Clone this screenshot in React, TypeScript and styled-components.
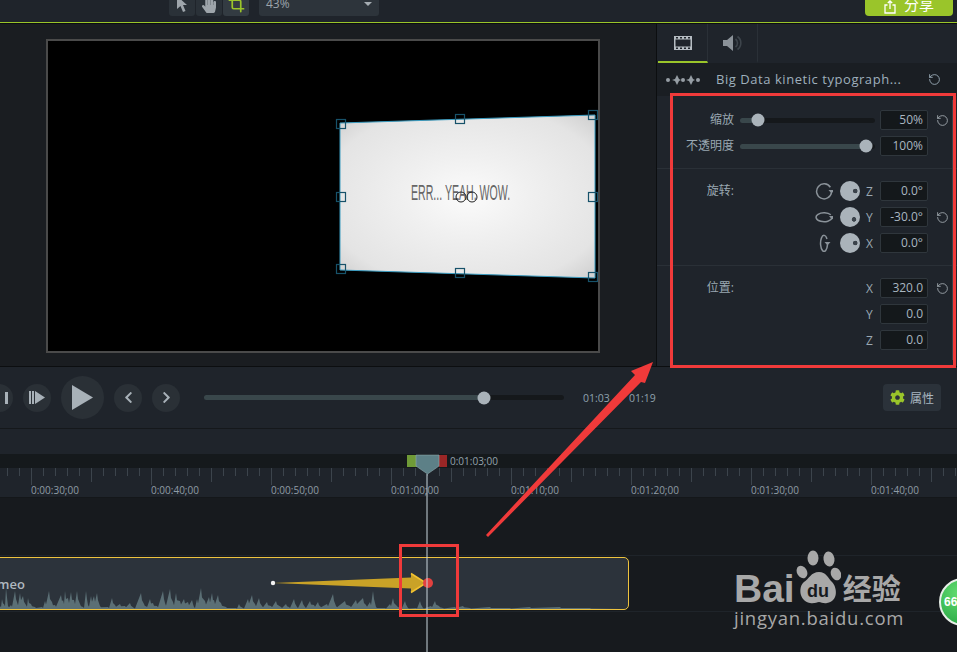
import styled, { createGlobalStyle } from 'styled-components';
import { FaCog, FaChevronLeft, FaChevronRight, FaHandPaper } from 'react-icons/fa';
import { Crop, RotateCcw } from 'lucide-react';

const green = '#9ac52a';
const ui = `'Open Sans', 'Noto Sans CJK SC', sans-serif`;

const GlobalStyle = createGlobalStyle`
  * { box-sizing: border-box; }
  html, body { margin: 0; background: #1f242b; }
  body { font-family: ${ui}; }
`;

const timeLabels = ['0:00:30;00', '0:00:40;00', '0:00:50;00', '0:01:00;00', '0:01:10;00', '0:01:20;00', '0:01:30;00', '0:01:40;00'];

// x, height of the wave form peaks
const peaks: [number, number][] = [
  [0, 3], [2, 10], [4, 5], [6, 21], [8, 3], [11, 4], [15, 18], [17, 7], [20, 16], [23, 13], [26, 4], [28, 11], [31, 5], [35, 2], [42, 2],
  [45, 8], [49, 18], [52, 7], [55, 4], [61, 14], [63, 9], [65, 18], [68, 11], [71, 17], [74, 9], [77, 18], [80, 5], [83, 2], [86, 18], [88, 4],
  [91, 13], [94, 13], [97, 16], [100, 3], [108, 2], [112, 11], [115, 4], [120, 5], [125, 3], [130, 6], [134, 1], [141, 16], [144, 5], [146, 3], [150, 10],
  [153, 6], [157, 3], [163, 18], [165, 6], [170, 20], [173, 7], [176, 16], [180, 8], [184, 10], [188, 7], [192, 9], [194, 2], [197, 10], [201, 21],
  [205, 8], [209, 12], [212, 16], [214, 9], [218, 14], [221, 6], [226, 2], [236, 1], [239, 5], [243, 1], [248, 10], [252, 14], [255, 5], [259, 11],
  [262, 3], [267, 7], [271, 3], [276, 8], [281, 2], [286, 5], [289, 2], [294, 10], [297, 2], [302, 9], [305, 2], [310, 8], [314, 4], [318, 7], [320, 3],
  [327, 5], [333, 15], [336, 3], [345, 8], [350, 3], [356, 9], [363, 11], [366, 4], [370, 7], [373, 18], [376, 2], [385, 1], [390, 5], [393, 11], [397, 3], [401, 2], [405, 8],
  [408, 1], [416, 1], [420, 8], [423, 1], [431, 3], [435, 8], [439, 3], [443, 1], [455, 2], [463, 3], [470, 1], [490, 2], [510, 1], [530, 2], [560, 2], [590, 1], [620, 0],
];
// a small notch after every peak keeps the spikes narrow
const wavePath = `M0 24 ${peaks
  .map(([x, h]) => `L${x} ${24 - h} L${x + 1} ${24 - h * 0.55}`)
  .join(' ')} L620 24 Z`;

const Page = styled.div`
  position: relative;
  width: 957px;
  height: 652px;
  overflow: hidden;
  display: flex;
  flex-direction: column;
  background: #1f242b;
`;

const TopBar = styled.header`
  height: 23px;
  flex: none;
  display: flex;
  align-items: flex-end;
  padding: 0 4px 6px 169px;
  overflow: hidden;
  background: #1f242b;
  border-bottom: 1px solid ${green};
`;

const ToolGroup = styled.div`
  display: flex;
  gap: 1px;
`;

const ToolButton = styled.div<{ $active?: boolean }>`
  width: 26px;
  height: 28px;
  display: flex;
  align-items: flex-end;
  justify-content: center;
  padding-bottom: 3px;
  color: #9ea5ab;
  background: ${({ $active }) => ($active ? '#333b42' : '#2a3138')};
  border-radius: 0 0 3px 3px;
`;

const ZoomSelect = styled.div`
  width: 120px;
  height: 28px;
  margin-left: 10px;
  padding: 0 7px 5px;
  display: flex;
  align-items: flex-end;
  justify-content: space-between;
  font-size: 12px;
  line-height: 14px;
  color: #9ea5ab;
  background: #2d343b;
  border-radius: 0 0 3px 3px;
`;

const Caret = styled.span`
  width: 0;
  height: 0;
  margin: 0 0 5px;
  border-left: 4px solid transparent;
  border-right: 4px solid transparent;
  border-top: 4px solid #a5acb2;
`;

const ShareButton = styled.div`
  width: 88px;
  height: 28px;
  margin-left: auto;
  padding-bottom: 2px;
  display: flex;
  align-items: flex-end;
  justify-content: center;
  gap: 8px;
  font-size: 15px;
  line-height: 20px;
  color: #fff;
  background: ${green};
  border-radius: 0 0 4px 4px;
`;

const Main = styled.div`
  height: 344px;
  flex: none;
  display: flex;
  border-top: 1px solid #0c0e10;
  border-bottom: 1px solid #0c0e10;
`;

const CanvasArea = styled.section`
  width: 657px;
  flex: none;
  padding: 15px 0 0 46px;
  background: #1a1d21;
  border-right: 1px solid #0c0e10;
`;

const Stage = styled.div`
  width: 554px;
  height: 314px;
  background: #000;
  border: 2px solid #4a4a4a;

  svg {
    display: block;
  }
`;

const SidePanel = styled.aside`
  position: relative;
  flex: 1;
  display: flex;
  flex-direction: column;
  background: #1f242b;
`;

const Tabs = styled.div`
  height: 39px;
  flex: none;
  padding-left: 1px;
  display: flex;
`;

const Tab = styled.div<{ $active?: boolean }>`
  width: 50px;
  display: flex;
  align-items: center;
  justify-content: center;
  border-right: 1px solid #2a3037;
  border-bottom: 2px solid ${({ $active }) => ($active ? green : 'transparent')};
`;

const ClipHeader = styled.div`
  height: 33px;
  flex: none;
  display: flex;
  align-items: center;
  padding: 0 16px 0 9px;
  background: #1a1e23;
  color: #9fb0bd;
`;

const ClipName = styled.span`
  margin: 0 0 2px 16px;
  flex: 1;
  font-size: 13px;
  letter-spacing: 0.55px;
  white-space: nowrap;
`;

const Section = styled.div<{ $top?: number; $last?: boolean }>`
  padding: ${({ $top }) => $top ?? 9}px 0 9px;
  border-bottom: 1px solid ${({ $last }) => ($last ? 'transparent' : '#2a3037')};
`;

const Row = styled.div`
  height: 26px;
  display: grid;
  grid-template-columns: 77px 1fr 48px 29px;
  align-items: center;
`;

const Label = styled.span`
  margin-bottom: 2px;
  text-align: right;
  font-size: 12px;
  color: #9aa8b2;
`;

const Controls = styled.div`
  display: flex;
  align-items: center;
  justify-content: flex-end;
  padding-right: 5px;
`;

const SliderTrack = styled.div<{ $value: number; $width: number; $thumb?: number }>`
  position: relative;
  width: ${({ $width }) => $width}px;
  height: 5px;
  flex: none;
  border-radius: 3px;
  background: linear-gradient(to right, #39474b ${({ $value }) => $value}%, #15181b ${({ $value }) => $value}%);

  &::after {
    content: '';
    position: absolute;
    left: ${({ $value }) => $value}%;
    top: 50%;
    width: ${({ $thumb }) => $thumb ?? 13}px;
    height: ${({ $thumb }) => $thumb ?? 13}px;
    border-radius: 50%;
    background: #aab3ba;
    transform: translate(-50%, -50%);
  }
`;

const Field = styled.div`
  height: 20px;
  padding-right: 4px;
  text-align: right;
  font-size: 12px;
  line-height: 18px;
  color: #a9b6c0;
  background: #14181b;
  border: 1px solid #2f363c;
  border-radius: 2px;
`;

const ResetCell = styled.div`
  padding-left: 8px;
  display: flex;
  color: #a3abb1;
`;

const Axis = styled.span`
  width: 9px;
  margin-left: 6px;
  font-size: 12px;
  color: #9aa8b2;
`;

const Dial = styled.div<{ $dot: string }>`
  width: 20px;
  height: 20px;
  margin-left: 7px;
  border-radius: 50%;
  background: radial-gradient(circle at ${({ $dot }) => $dot}, #3b434b 2px, #aab3ba 2.6px);
`;

const PanelScroll = styled.div`
  position: absolute;
  right: 2px;
  top: 76px;
  bottom: 6px;
  width: 3px;
  background: #3a4149;
`;

const Player = styled.div`
  height: 62px;
  flex: none;
  display: flex;
  align-items: center;
  background: #1f242b;
  border-bottom: 1px solid #15181b;
`;

const RoundButton = styled.div<{ $size?: number }>`
  width: ${({ $size }) => $size ?? 28}px;
  height: ${({ $size }) => $size ?? 28}px;
  flex: none;
  display: flex;
  align-items: center;
  justify-content: center;
  margin-left: 10px;
  border-radius: 50%;
  color: #a8b1b8;
  background: #2a3036;

  &:first-child {
    margin-left: -15px;
    justify-content: flex-end;
    padding-right: 4px;
  }
`;

const PlayerSlider = styled.div`
  margin: 0 19px 0 24px;
`;

const TimeText = styled.span`
  width: 46px;
  font-size: 10.5px;
  color: #8fa2ae;
`;

const PropsButton = styled.div`
  width: 58px;
  height: 27px;
  margin: 0 16px 0 auto;
  display: flex;
  align-items: center;
  justify-content: center;
  gap: 5px;
  font-size: 12px;
  color: #a9b6c0;
  background: #2b323a;
  border-radius: 4px;
`;

const ToolStrip = styled.div`
  height: 25px;
  flex: none;
  background: #1f242b;
`;

const HeadStrip = styled.div`
  height: 14px;
  flex: none;
  padding-left: 450px;
  font-size: 10px;
  line-height: 14px;
  color: #94a3ad;
  background: #15191c;
`;

const Ruler = styled.div`
  height: 30px;
  flex: none;
  display: flex;
  padding-left: 31px;
  background-color: #1f242b;
  background-image:
    linear-gradient(to right, #3c444c 1px, transparent 1px),
    linear-gradient(to right, #3c444c 1px, transparent 1px),
    linear-gradient(to right, #3c444c 1px, transparent 1px);
  background-repeat: repeat-x;
  background-size: 12px 8px, 60px 14px, 120px 17px;
  background-position: 7px 0, 31px 0, 31px 0;
  border-bottom: 1px solid #14171a;
`;

const RulerLabel = styled.span`
  width: 120px;
  flex: none;
  padding-top: 16px;
  font-size: 10px;
  line-height: 13px;
  color: #8f9ca6;
`;

const Tracks = styled.div`
  flex: 1;
  background: #171a1e;
`;

const Track = styled.div<{ $height: number }>`
  height: ${({ $height }) => $height}px;
  padding-top: 1px;
  border-bottom: 1px solid #1f242a;
`;

const Clip = styled.div`
  position: relative;
  width: 637px;
  height: 53px;
  margin-left: -8px;
  padding: 17px 0 0 4px;
  font-size: 13px;
  font-weight: 600;
  line-height: 18px;
  color: #b0b8bf;
  background: #2c333b;
  border: 1px solid #eec33e;
  border-radius: 5px;
`;

const Wave = styled.svg`
  position: absolute;
  left: 7px;
  bottom: 0;
`;

const GoldArrow = styled.svg`
  position: absolute;
  left: 268px;
  top: 572px;
`;

const Playhead = styled.svg`
  position: absolute;
  left: 405px;
  top: 454px;
`;

const RedBox = styled.div<{ $x: number; $y: number; $w: number; $h: number }>`
  position: absolute;
  left: ${({ $x }) => $x}px;
  top: ${({ $y }) => $y}px;
  width: ${({ $w }) => $w}px;
  height: ${({ $h }) => $h}px;
  border: 3px solid #f03a3a;
`;

const RedArrow = styled.svg`
  position: absolute;
  left: 480px;
  top: 360px;
`;

const Watermark = styled.div`
  position: absolute;
  left: 734px;
  top: 550px;
  width: 175px;
  color: #a8a8a8;
`;

const LogoLine = styled.div`
  height: 54px;
  display: flex;
  align-items: flex-end;
  font-family: 'Liberation Sans', 'Noto Sans CJK SC', sans-serif;
  font-weight: 700;
`;

const LogoBai = styled.span`
  font-size: 39px;
  line-height: 30px;
`;

const LogoJy = styled.span`
  margin: 0 0 2px 2px;
  font-size: 29px;
  line-height: 30px;
  font-family: 'Noto Sans CJK SC', sans-serif;
`;

const LogoUrl = styled.div`
  margin-top: 3px;
  font-family: 'Open Sans', sans-serif;
  font-size: 18.5px;
  line-height: 22px;
  letter-spacing: 0.75px;
  white-space: nowrap;
`;

const Badge = styled.div`
  position: absolute;
  left: 939px;
  top: 578px;
  width: 48px;
  height: 48px;
  padding-left: 3px;
  border: 2px solid #e8efe8;
  border-radius: 50%;
  font-family: 'Liberation Sans', sans-serif;
  font-size: 12px;
  font-weight: 700;
  line-height: 44px;
  color: #fff;
  background: radial-gradient(circle at 40% 30%, #63dc70, #2fae4a 75%);
`;

const ResetIcon = () => <RotateCcw size={13} strokeWidth={1.6} />;

const RotateGlyph = ({ rx, ry }: { rx: number; ry: number }) => (
  <svg width="18" height="18" viewBox="0 0 18 18" fill="none">
    <path
      d={`M${9 + rx * 0.85} ${9 - ry * 0.5} A${rx} ${ry} 0 1 0 ${9 + rx} ${9 + ry * 0.2}`}
      stroke="#8a9299"
      strokeWidth="1.5"
    />
    <path d={`M${6 + rx} 8h6l-3 3.500z`} fill="#8a9299" />
  </svg>
);

const handles: [number, number][] = [
  [341, 124], [460, 119], [593, 115], [341, 197],
  [593, 197], [341, 269], [460, 273], [593, 277],
];

export default function App() {
  return (
    <Page>
      <GlobalStyle />
      <TopBar>
        <ToolGroup>
          <ToolButton>
            <svg width="14" height="17" viewBox="0 0 14 17">
              <path d="M2 0l10 9H8l2.500 6-2.500 1-2.500-6L2 13z" fill="#9ea5ab" />
            </svg>
          </ToolButton>
          <ToolButton>
            <FaHandPaper size={16} />
          </ToolButton>
          <ToolButton $active>
            <Crop size={17} color={green} strokeWidth={2.4} />
          </ToolButton>
        </ToolGroup>
        <ZoomSelect>
          43%
          <Caret />
        </ZoomSelect>
        <ShareButton>
          <svg width="12" height="14" viewBox="0 0 12 14" fill="none" stroke="#fff" strokeWidth="1.3">
            <path d="M3.500 5H1v8h10V5H8.500M6 9V1M3.800 3L6 1l2.200 2" />
          </svg>
          分享
        </ShareButton>
      </TopBar>

      <Main>
        <CanvasArea>
          <Stage>
            <svg width="550" height="310" viewBox="48 41 550 310">
              <defs>
                <radialGradient id="clipGlow" cx="50%" cy="50%" r="70%">
                  <stop offset="0" stopColor="#fbfbfb" />
                  <stop offset="0.35" stopColor="#f0f0f0" />
                  <stop offset="0.8" stopColor="#e4e4e4" />
                  <stop offset="1" stopColor="#cfcfcf" />
                </radialGradient>
              </defs>
              <polygon points="340,123 595,115 595,278 340,270" fill="url(#clipGlow)" stroke="#3b9cc0" strokeWidth="1" />
              <text transform="translate(411 200) scale(0.481 1)" fontFamily="'Liberation Sans', sans-serif" fontSize="22" fill="#666">
                ERR... YEAH. WOW.
              </text>
              <circle cx="461" cy="197" r="5" fill="none" stroke="#222" />
              <circle cx="472" cy="197" r="5" fill="none" stroke="#222" />
              {handles.map(([x, y]) => (
                <rect key={`${x}-${y}`} x={x - 4.5} y={y - 4.5} width="9" height="9" fill="none" stroke="#17526a" strokeWidth="1.2" />
              ))}
            </svg>
          </Stage>
        </CanvasArea>

        <SidePanel>
          <Tabs>
            <Tab $active>
              <svg width="18" height="14" viewBox="0 0 18 14">
                <path
                  fillRule="evenodd"
                  d="M0 0h18v14H0zM1.500 3.500v7h15v-7zM2 1v1.500h2V1zM6 1v1.500h2V1zM10 1v1.500h2V1zM14 1v1.500h2V1zM2 11.500V13h2v-1.500zM6 11.500V13h2v-1.500zM10 11.500V13h2v-1.500zM14 11.500V13h2v-1.500z"
                  fill="#b5bcc2"
                />
              </svg>
            </Tab>
            <Tab>
              <svg width="19" height="16" viewBox="0 0 19 16" fill="none">
                <path d="M0 5h4l6-5v16l-6-5H0z" fill="#8b9299" />
                <path d="M12.500 4a5 5 0 0 1 0 8M14.500 1.500a8 8 0 0 1 0 13" stroke="#3e454c" strokeWidth="1.6" />
              </svg>
            </Tab>
          </Tabs>

          <ClipHeader>
            <svg width="34" height="10" viewBox="0 0 34 10" fill="#969ea5">
              <circle cx="2" cy="5" r="2" />
              <path d="M6 5l3-1 2-4 2 4 2 1-2 1-2 4-2-4z" />
              <circle cx="17" cy="5" r="2" />
              <path d="M20 5l3-1 2-4 2 4 2 1-2 1-2 4-2-4z" />
              <circle cx="32" cy="5" r="2" />
            </svg>
            <ClipName>Big Data kinetic typograph...</ClipName>
            <ResetIcon />
          </ClipHeader>

          <Section $top={11}>
            <Row>
              <Label>缩放</Label>
              <Controls>
                <SliderTrack $value={13} $width={135} />
              </Controls>
              <Field>50%</Field>
              <ResetCell>
                <ResetIcon />
              </ResetCell>
            </Row>
            <Row>
              <Label>不透明度</Label>
              <Controls>
                <SliderTrack $value={93} $width={135} />
              </Controls>
              <Field>100%</Field>
            </Row>
          </Section>

          <Section>
            <Row>
              <Label>旋转:</Label>
              <Controls>
                <RotateGlyph rx={7.5} ry={7.5} />
                <Dial $dot="76% 50%" />
                <Axis>Z</Axis>
              </Controls>
              <Field>0.0°</Field>
            </Row>
            <Row>
              <span />
              <Controls>
                <RotateGlyph rx={8} ry={4.5} />
                <Dial $dot="70% 62%" />
                <Axis>Y</Axis>
              </Controls>
              <Field>-30.0°</Field>
              <ResetCell>
                <ResetIcon />
              </ResetCell>
            </Row>
            <Row>
              <span />
              <Controls>
                <RotateGlyph rx={3.5} ry={8} />
                <Dial $dot="76% 50%" />
                <Axis>X</Axis>
              </Controls>
              <Field>0.0°</Field>
            </Row>
          </Section>

          <Section $last>
            <Row>
              <Label>位置:</Label>
              <Controls>
                <Axis>X</Axis>
              </Controls>
              <Field>320.0</Field>
              <ResetCell>
                <ResetIcon />
              </ResetCell>
            </Row>
            <Row>
              <span />
              <Controls>
                <Axis>Y</Axis>
              </Controls>
              <Field>0.0</Field>
            </Row>
            <Row>
              <span />
              <Controls>
                <Axis>Z</Axis>
              </Controls>
              <Field>0.0</Field>
            </Row>
          </Section>
          <PanelScroll />
        </SidePanel>
      </Main>

      <Player>
        <RoundButton>
          <svg width="4" height="12" viewBox="0 0 4 12">
            <rect width="3" height="12" fill="#a8b1b8" />
          </svg>
        </RoundButton>
        <RoundButton>
          <svg width="16" height="13" viewBox="0 0 16 13" fill="#a8b1b8">
            <rect width="2" height="13" />
            <rect x="3" width="2" height="13" />
            <path d="M6 0l10 6.500L6 13z" />
          </svg>
        </RoundButton>
        <RoundButton $size={43}>
          <svg width="21" height="25" viewBox="0 0 21 25">
            <path d="M0 0l21 12.500L0 25z" fill="#a8b1b8" />
          </svg>
        </RoundButton>
        <RoundButton>
          <FaChevronLeft size={13} />
        </RoundButton>
        <RoundButton>
          <FaChevronRight size={13} />
        </RoundButton>
        <PlayerSlider>
          <SliderTrack $value={77.8} $width={360} $thumb={13} />
        </PlayerSlider>
        <TimeText>01:03</TimeText>
        <TimeText>01:19</TimeText>
        <PropsButton>
          <FaCog size={15} color={green} />
          属性
        </PropsButton>
      </Player>

      <ToolStrip />
      <HeadStrip>0:01:03;00</HeadStrip>
      <Ruler>
        {timeLabels.map((t) => (
          <RulerLabel key={t}>{t}</RulerLabel>
        ))}
      </Ruler>

      <Tracks>
        <Track $height={58} />
        <Track $height={56}>
          <Clip>
            meo
            <Wave width="620" height="24" viewBox="0 0 620 24">
              <path d={wavePath} fill="#5b6f75" />
            </Wave>
          </Clip>
        </Track>
      </Tracks>

      <GoldArrow width="166" height="22" viewBox="0 0 166 22">
        <path d="M5 11L143 5.500V1.500L158 11L143 20.500V16.500z" fill="#c9a227" />
        <path d="M143 1.500L158 11L143 20.500" fill="none" stroke="#f2c230" strokeWidth="1.6" />
        <circle cx="5" cy="11" r="2.200" fill="#f2f2f2" />
        <circle cx="160" cy="11" r="5" fill="#e2413f" />
      </GoldArrow>

      <Playhead width="44" height="198" viewBox="0 0 44 198">
        <rect x="2" y="1" width="10" height="12" fill="#6f9a37" />
        <rect x="34" y="1" width="8" height="12" fill="#9a2626" />
        <line x1="22" y1="20" x2="22" y2="198" stroke="#c9d6dd" />
        <path d="M11 1H34V12L22.500 20L11 12z" fill="#5d8087" stroke="#8ea9ae" strokeWidth="0.6" />
      </Playhead>

      <RedBox $x={670} $y={93} $w={286} $h={275} />
      <RedBox $x={399} $y={544} $w={60} $h={73} />
      <RedArrow width="180" height="180" viewBox="0 0 180 180">
        <polygon points="173,2 151,11 155,15 6,175 8,177 161,22 165,23" fill="#f03a3a" />
      </RedArrow>

      <Watermark>
        <LogoLine>
          <LogoBai>Bai</LogoBai>
          <svg width="46" height="54" viewBox="0 0 46 54">
            <ellipse cx="18" cy="8" rx="5.500" ry="7.500" fill="#a8a8a8" />
            <ellipse cx="34" cy="9" rx="5.500" ry="7.500" fill="#a8a8a8" transform="rotate(-8 34 9)" />
            <ellipse cx="7" cy="22" rx="5" ry="6.500" fill="#a8a8a8" transform="rotate(-30 7 22)" />
            <ellipse cx="41" cy="24" rx="5" ry="6.500" fill="#a8a8a8" transform="rotate(-25 41 24)" />
            <path d="M24 22c7 0 9 6 13 10 5 5 7 19-5 21-3 1-6-1-8-1s-5 2-9 1C4 51 3 37 9 32c5-3 7-10 15-10z" fill="#a8a8a8" />
            <text x="23" y="47" textAnchor="middle" fontFamily="'Liberation Sans', sans-serif" fontWeight="700" fontSize="18" fill="#171a1e">
              du
            </text>
          </svg>
          <LogoJy>经验</LogoJy>
        </LogoLine>
        <LogoUrl>jingyan.baidu.com</LogoUrl>
      </Watermark>

      <Badge>66</Badge>
    </Page>
  );
}
